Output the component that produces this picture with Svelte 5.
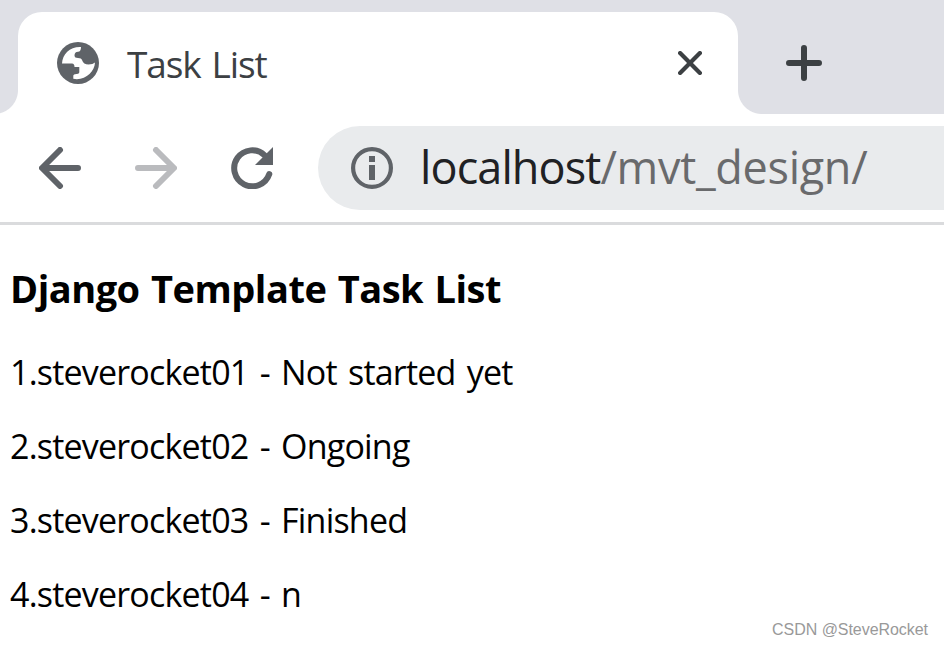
<script>
  const tasks = [
    { id: 1, name: 'steverocket01', status: 'Not started yet' },
    { id: 2, name: 'steverocket02', status: 'Ongoing' },
    { id: 3, name: 'steverocket03', status: 'Finished' },
    { id: 4, name: 'steverocket04', status: 'n' }
  ];
</script>

<div class="browser">
  <!-- Tab strip -->
  <div class="tab-strip">
    <div class="tab">
      <svg class="favicon" viewBox="0 0 42 42" width="42" height="42" aria-hidden="true">
        <circle cx="21" cy="21" r="21" fill="#5f6368"></circle>
        <path d="M24 5C13 4.500 5.500 12 5 21.500h10q2.500 0 2.500 3.500h4.800v5.500q-.5 1.500-3 1.500-3 .2-3 1.500v3.300C28 39 37.500 30 38 20.500q-2 2-6.500 2-5 0-6.500-4.500-.5-2-4-2-3.500 0-3.500-2.500 0-3.500 3.500-3.700 3 0 3-4.800z" fill="#fff"></path>
      </svg>
      <span class="tab-title">Task List</span>
      <button class="close-btn" aria-label="Close tab">
        <svg viewBox="0 0 24 24" width="24" height="24" fill="none" stroke="currentColor" stroke-width="4.200" stroke-linecap="round">
          <path d="M2.100 2.100l19.800 19.800M21.900 2.100L2.100 21.900"></path>
        </svg>
      </button>
    </div>
    <button class="new-tab-btn" aria-label="New tab">
      <svg viewBox="0 0 36 36" width="36" height="36" fill="none" stroke="currentColor" stroke-width="6" stroke-linecap="round">
        <path d="M18 3v30M3 18h30"></path>
      </svg>
    </button>
  </div>

  <!-- Toolbar -->
  <div class="toolbar">
    <button class="nav-btn" aria-label="Back">
      <svg viewBox="0 0 42 42" width="42" height="42" fill="none" stroke="currentColor" stroke-width="6" stroke-linecap="round" stroke-linejoin="round">
        <path d="M39 21H4M21 3L3 21l18 18"></path>
      </svg>
    </button>
    <button class="nav-btn disabled" aria-label="Forward">
      <svg viewBox="0 0 42 42" width="42" height="42" fill="none" stroke="currentColor" stroke-width="6" stroke-linecap="round" stroke-linejoin="round">
        <path d="M3 21h35M21 3l18 18-18 18"></path>
      </svg>
    </button>
    <button class="nav-btn" aria-label="Reload">
      <svg viewBox="0 0 42 42" width="42" height="42" fill="none">
        <path d="M38.300 27A18 18 0 1 1 33.700 8.300" stroke="currentColor" stroke-width="6" stroke-linecap="round"></path>
        <path d="M42 0v18H24z" fill="currentColor"></path>
      </svg>
    </button>
    <div class="address-bar">
      <svg viewBox="0 0 42 42" width="42" height="42" aria-hidden="true">
        <circle cx="21" cy="21" r="18.900" fill="none" stroke="#5f6368" stroke-width="4.200"></circle>
        <path d="M18 9h6v6h-6zM18 18h6v15h-6z" fill="#5f6368"></path>
      </svg>
      <span class="url"><span class="host">localhost</span><span class="path">/mvt_design/</span></span>
    </div>
  </div>

  <!-- Page -->
  <div class="page">
    <h3>Django Template Task List</h3>
    {#each tasks as task (task.id)}
      <p>{task.id}.{task.name} - {task.status}</p>
    {/each}
    <span class="watermark">CSDN @SteveRocket</span>
  </div>
</div>

<style>
  :global(body) {
    margin: 0;
    background: #fff;
  }

  .browser {
    display: flex;
    flex-direction: column;
    height: 645px;
    overflow: hidden;
    font-family: 'Open Sans', 'Noto Sans', sans-serif;
  }

  button {
    display: flex;
    padding: 0;
    border: none;
    background: none;
    color: #5f6368;
  }

  svg {
    display: block;
    flex-shrink: 0;
  }

  .tab-strip {
    display: flex;
    flex-shrink: 0;
    align-items: center;
    box-sizing: border-box;
    height: 114px;
    padding: 12px 0 0 18px;
    background: #dfe0e6;
  }

  .tab {
    position: relative;
    display: flex;
    align-items: center;
    box-sizing: border-box;
    width: 720px;
    height: 102px;
    padding: 0 36px 0 39px;
    border-radius: 24px 24px 0 0;
    background: #fff;
  }

  /* Flared corners at the foot of the tab */
  .tab::before,
  .tab::after {
    content: '';
    position: absolute;
    bottom: 0;
    width: 24px;
    height: 24px;
  }
  .tab::before {
    right: 100%;
    background: radial-gradient(circle at 0 0, transparent 23.5px, #fff 24.5px);
  }
  .tab::after {
    left: 100%;
    background: radial-gradient(circle at 100% 0, transparent 23.5px, #fff 24.5px);
  }

  .tab-title {
    flex: 1;
    margin-left: 28px;
    padding-top: 2px;
    font-size: 37px;
    line-height: 50px;
    letter-spacing: -1.1px;
    word-spacing: 2.5px;
    color: #3c4043;
  }

  .close-btn,
  .new-tab-btn {
    color: #3c4043;
  }

  .new-tab-btn {
    margin-left: 48px;
  }

  .toolbar {
    display: flex;
    flex-shrink: 0;
    align-items: center;
    box-sizing: border-box;
    height: 111px;
    padding-left: 39px;
    border-bottom: 3px solid #dadbdd;
    background: #fff;
  }

  .nav-btn {
    margin-right: 54px;
  }
  .nav-btn.disabled { color: #babbbe; }

  .address-bar {
    display: flex;
    flex: 1;
    align-items: center;
    box-sizing: border-box;
    height: 84px;
    margin-left: -9px;
    padding-left: 33px;
    border-radius: 42px 0 0 42px;
    background: #e9ebed;
  }

  .url {
    margin-left: 27px;
    padding-bottom: 2px;
    font-size: 45px;
    line-height: 60px;
    white-space: nowrap;
  }
  .host {
    letter-spacing: -0.9px;
    color: #202124;
  }
  .path {
    letter-spacing: -0.3px;
    color: #696a6c;
  }

  .page {
    position: relative;
    flex: 1;
    min-height: 0;
    box-sizing: border-box;
    padding: 38px 10px 0;
    color: #000;
  }

  h3 {
    margin: 0 0 37px;
    font-size: 38px;
    font-weight: 700;
    line-height: 50px;
    letter-spacing: -0.5px;
    word-spacing: 2px;
  }

  p {
    margin: 0 0 30px;
    font-size: 34px;
    line-height: 44px;
    letter-spacing: -0.8px;
    word-spacing: 3.2px;
    white-space: nowrap;
  }

  .watermark {
    position: absolute;
    right: 16px;
    bottom: 5px;
    font-family: 'Liberation Sans', sans-serif;
    font-size: 16px;
    line-height: 20px;
    letter-spacing: -0.05px;
    color: #999;
  }
</style>
